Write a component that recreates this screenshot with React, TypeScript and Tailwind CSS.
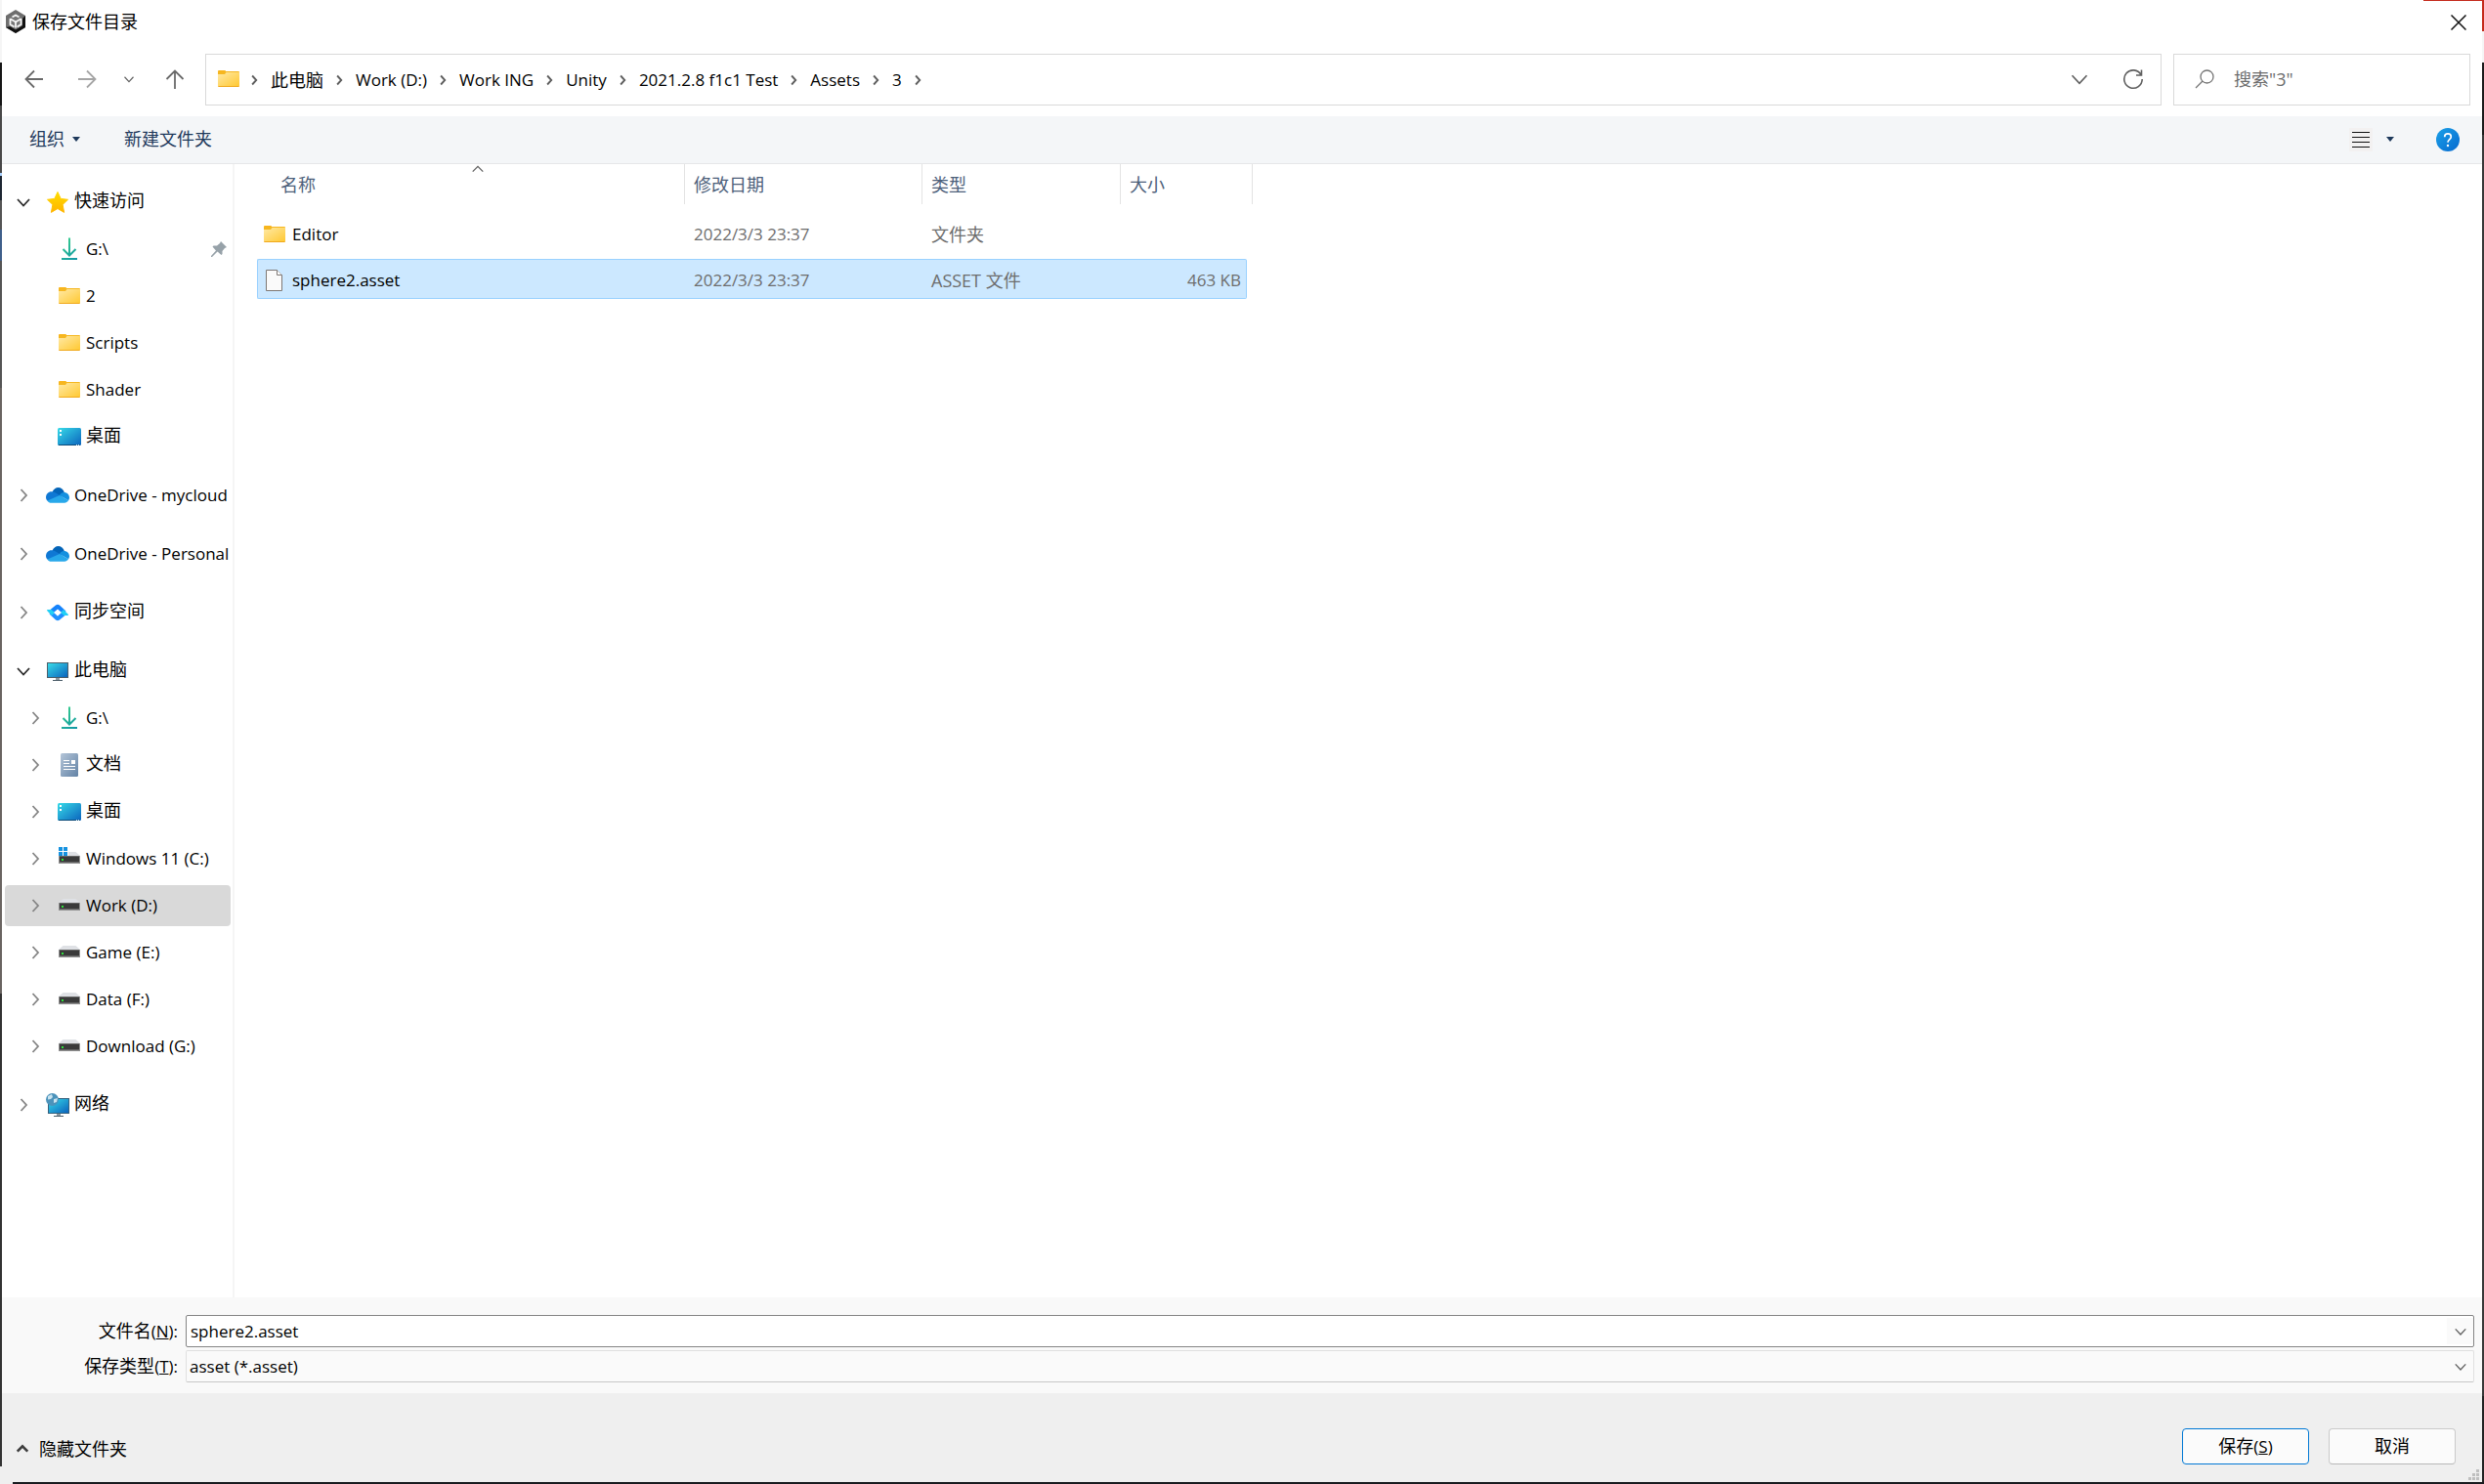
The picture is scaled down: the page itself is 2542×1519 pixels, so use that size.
import React from 'react';
import { clsx } from 'clsx';

type IconProps = { className?: string };

const Chevron: React.FC<{ d: string; size: number; color?: string; stroke?: number }> = ({ d, size, color = '#5f5f5f', stroke = 1.5 }) => (
  <svg width={size} height={size} viewBox="0 0 16 16" fill="none" stroke={color} strokeWidth={stroke} className="shrink-0">
    <path d={d} />
  </svg>
);

const RIGHT = 'M5.5 2l5.5 6-5.5 6';
const DOWN = 'M2 5l6 6.500 6-6.500';
const UP = 'M2 11l6-6 6 6';

const FolderIcon: React.FC<IconProps> = () => (
  <svg width="24" height="24" viewBox="0 0 24 24" className="shrink-0">
    <defs>
      <linearGradient id="folder" x1="0" y1="0" x2="1" y2="1">
        <stop offset="0" stopColor="#ffe9a6" />
        <stop offset="1" stopColor="#ffc933" />
      </linearGradient>
    </defs>
    <path d="M1 4q0-1 1-1h6q1 0 1 1v2H1z" fill="#f8b51c" />
    <path d="M1 5h7l1-1h13q1 0 1 1v14H1z" fill="#f5b721" />
    <path d="M1 7h7l1.500-2H23v14H1z" fill="url(#folder)" />
    <path d="M1 19h22q0 1-1 1H2q-1 0-1-1z" fill="#f0a91c" />
  </svg>
);

const FileIcon: React.FC<IconProps> = () => (
  <svg width="24" height="24" viewBox="0 0 24 24" className="shrink-0">
    <path d="M3.500 1.500h11l5 5v16h-16z" fill="#fafafa" stroke="#7d7774" />
    <path d="M14.500 1.500v5h5" fill="#fff" stroke="#7d7774" />
  </svg>
);

const StarIcon: React.FC<IconProps> = () => (
  <svg width="24" height="24" viewBox="0 0 24 24" className="shrink-0">
    <defs>
      <linearGradient id="star" x1="0" y1="0" x2="0" y2="1">
        <stop offset="0" stopColor="#ffdc00" />
        <stop offset="1" stopColor="#ffb400" />
      </linearGradient>
    </defs>
    <path d="M12 1.500l3.200 6.900 7.300.9-5.400 5.100 1.500 8-6.600-3.900-6.600 3.900 1.500-8L1.500 9.300l7.300-.9z" fill="url(#star)" stroke="url(#star)" strokeWidth="1" strokeLinejoin="round" />
  </svg>
);

const DownloadIcon: React.FC<IconProps> = () => (
  <svg width="24" height="24" viewBox="0 0 24 24" fill="none" className="shrink-0">
    <defs>
      <linearGradient id="dl" gradientUnits="userSpaceOnUse" x1="4" y1="0" x2="20" y2="24">
        <stop offset="0" stopColor="#3bd58a" />
        <stop offset="1" stopColor="#0f93a6" />
      </linearGradient>
    </defs>
    <path d="M12 .5v18M5.500 12l6.500 6.500 6.500-6.500M4 22h16" stroke="url(#dl)" strokeWidth="2" />
  </svg>
);

const DesktopIcon: React.FC<IconProps> = () => (
  <svg width="24" height="24" viewBox="0 0 24 24" className="shrink-0">
    <defs>
      <linearGradient id="desk" x1="0" y1="0" x2="1" y2="1">
        <stop offset="0" stopColor="#37dbe8" />
        <stop offset="1" stopColor="#0b63bd" />
      </linearGradient>
    </defs>
    <rect y="3" width="24" height="18" rx="1.500" fill="url(#desk)" />
    <path d="M1 20h22v1H1z" fill="#0c4a78" />
    <path d="M2 5h2v2H2zM2 9h2v2H2z" fill="#fff" />
    <path d="M19 20h1v1h-1zM21 20h1v1h-1z" fill="#d5eaf5" />
  </svg>
);

const CloudIcon: React.FC<IconProps> = () => (
  <svg width="24" height="24" viewBox="0 0 24 24" className="shrink-0">
    <path d="M6.500 8.500C8 5.500 10 4 12.500 4c3 0 5.500 2 6.300 5l-4.300 5z" fill="#0364b8" />
    <path d="M5.500 8.200c2 0 3 .4 4.500 1.300l8 5L3 18.600c-2-.8-3-2.400-3-4.600 0-3.200 2.500-5.800 5.500-5.800z" fill="#0f78d4" />
    <path d="M18.500 9c3 0 5.500 2.200 5.500 5.300 0 1-.3 2.200-1 3l-9-5.300c1-1.800 2.500-3 4.500-3z" fill="#1490df" />
    <path d="M14 12l9 5.300c-.9 1.600-2.400 2.500-4 2.500H5.500c-1.600 0-3.200-.9-4-2.300z" fill="#28a8ea" />
  </svg>
);

const SyncIcon: React.FC<IconProps> = () => (
  <svg width="24" height="24" viewBox="0 0 24 24" className="shrink-0">
    <path d="M4.500 9l5.500-4.500q2-1.500 4 0l6.500 6-4 3.500-4.500-5-5 5z" fill="#1683fb" />
    <path d="M19.500 15l-5.500 4.500q-2 1.500-4 0l-6.500-6 4-3.500 4.500 5.500 5-5.500z" fill="#1f8fff" />
    <path d="M1 9h4.500l3.500 3-3 3-4.500-4.500zM23 15h-4.500l-3.500-3 3-3 4.500 4.500z" fill="#22d0f5" />
    <path d="M12 8.500l4 3.500-4 3.500L8 12z" fill="#fff" />
  </svg>
);

const ComputerIcon: React.FC<IconProps> = () => (
  <svg width="24" height="24" viewBox="0 0 24 24" className="shrink-0">
    <path d="M1 3h22v16H1z" fill="#4b5d69" />
    <path d="M2 4h20v14H2z" fill="url(#desk)" />
    <path d="M10 19h4v2h-4z" fill="#8b979f" />
    <path d="M7 21h10v1H7z" fill="#4b5d69" />
  </svg>
);

const DocumentIcon: React.FC<IconProps> = () => (
  <svg width="24" height="24" viewBox="0 0 24 24" className="shrink-0">
    <defs>
      <linearGradient id="doc" x1="0" y1="0" x2="1" y2="1">
        <stop offset="0" stopColor="#b4c5d8" />
        <stop offset="1" stopColor="#6383a6" />
      </linearGradient>
    </defs>
    <rect x="3" width="18" height="24" rx="1.500" fill="url(#doc)" />
    <path d="M6 7h6v1H6zM6 10h6v1H6zM14 7h4v4h-4zM6 13h12v1H6zM6 16h12v1H6z" fill="#fff" />
  </svg>
);

const DriveIcon: React.FC<IconProps & { system?: boolean }> = ({ system }) => (
  <svg width="24" height="24" viewBox="0 0 24 24" className="shrink-0">
    <path d="M5.500 5h13L23 9H1z" fill="#dfe1e5" />
    <path d="M1 9h22v8H1z" fill="#8f8f8f" />
    <path d="M2 9.500h20v6H2z" fill="#3a3a3a" />
    <path d="M4 12h2v2H4z" fill="#2fe23c" />
    {system && (
      <>
        <path d="M0 0h11v9H0z" fill="#fff" />
        <path d="M1 0h4v4H1zM6 0h4v4H6zM1 5h4v4H1zM6 5h4v4H6z" fill="#1592e0" />
      </>
    )}
  </svg>
);

const NetworkIcon: React.FC<IconProps> = () => (
  <svg width="24" height="24" viewBox="0 0 24 24" className="shrink-0">
    <path d="M2 5h22v16H2z" fill="#35617d" />
    <path d="M3 6h20v14H3z" fill="url(#desk)" />
    <path d="M11 21h4v2h-4z" fill="#8b979f" />
    <path d="M8 23h10v1H8z" fill="#4b5d69" />
    <circle cx="6.500" cy="6.500" r="6.500" fill="#4c93bb" />
    <path d="M2 3l4-2 1 3-2 2-3 .5zM8 6l4-1-1 4-3 1z" fill="#c9e3ef" />
  </svg>
);

const PinIcon: React.FC<IconProps> = () => (
  <svg width="16" height="16" viewBox="0 0 16 16" className="shrink-0">
    <path d="M10 0l6 6-2 1-2.500 3v3l-1 1L6.500 10.500 1 16H0v-1l5-5.500-3.500-4 1-1h3.500l3-2.500z" fill="#97a2a9" />
  </svg>
);

const AppIcon: React.FC<IconProps> = () => (
  <svg width="24" height="24" viewBox="0 0 24 24" className="shrink-0">
    <path d="M12 0l10 6v12l-10 6-10-6V6z" fill="#6e6e6e" />
    <path d="M22 6v12l-10 6-10-6 10-2z" fill="#111" />
    <path d="M12 3.500l7 4.200v8.600l-7 4.200-7-4.200V7.700z" fill="#777" />
    <path d="M12 12.500v6M12 12.500L6.500 9.300M12 12.500l5.500-3.200M6.500 9v6l4 2.500M17.500 9v6l-4 2.500M8.500 7.500L12 5.500l3.500 2" fill="none" stroke="#f8f8f8" strokeWidth="1.800" />
  </svg>
);

interface TreeItem {
  label: string;
  icon: React.ReactNode;
  level?: number;
  state?: 'open' | 'closed';
  pinned?: boolean;
  selected?: boolean;
}

const sections: TreeItem[][] = [
  [
    { label: '快速访问', icon: <StarIcon />, state: 'open' },
    { label: 'G:\\', icon: <DownloadIcon />, level: 1, pinned: true },
    { label: '2', icon: <FolderIcon />, level: 1 },
    { label: 'Scripts', icon: <FolderIcon />, level: 1 },
    { label: 'Shader', icon: <FolderIcon />, level: 1 },
    { label: '桌面', icon: <DesktopIcon />, level: 1 },
  ],
  [{ label: 'OneDrive - mycloud', icon: <CloudIcon />, state: 'closed' }],
  [{ label: 'OneDrive - Personal', icon: <CloudIcon />, state: 'closed' }],
  [{ label: '同步空间', icon: <SyncIcon />, state: 'closed' }],
  [
    { label: '此电脑', icon: <ComputerIcon />, state: 'open' },
    { label: 'G:\\', icon: <DownloadIcon />, level: 1, state: 'closed' },
    { label: '文档', icon: <DocumentIcon />, level: 1, state: 'closed' },
    { label: '桌面', icon: <DesktopIcon />, level: 1, state: 'closed' },
    { label: 'Windows 11 (C:)', icon: <DriveIcon system />, level: 1, state: 'closed' },
    { label: 'Work (D:)', icon: <DriveIcon />, level: 1, state: 'closed', selected: true },
    { label: 'Game (E:)', icon: <DriveIcon />, level: 1, state: 'closed' },
    { label: 'Data (F:)', icon: <DriveIcon />, level: 1, state: 'closed' },
    { label: 'Download (G:)', icon: <DriveIcon />, level: 1, state: 'closed' },
  ],
  [{ label: '网络', icon: <NetworkIcon />, state: 'closed' }],
];

const crumbs = ['此电脑', 'Work (D:)', 'Work ING', 'Unity', '2021.2.8 f1c1 Test', 'Assets', '3'];

const files = [
  { name: 'Editor', date: '2022/3/3 23:37', type: '文件夹', size: '', icon: <FolderIcon />, selected: false },
  { name: 'sphere2.asset', date: '2022/3/3 23:37', type: 'ASSET 文件', size: '463 KB', icon: <FileIcon />, selected: true },
];

const isLatin = (text: string) => /^[\x20-\x7e]*$/.test(text);

const textSize = (text: string) => (isLatin(text) ? 'text-[17px]' : 'text-[18px]');

const TitleBar = () => (
  <header className="flex h-[44px] items-center justify-between pl-0.5">
    <div className="flex items-center gap-[5px]">
      <AppIcon />
      <h1 className="text-[18px]">保存文件目录</h1>
    </div>
    <button aria-label="关闭" className="flex h-full w-[60px] items-center justify-center border-t border-[#c42b1c] pl-3">
      <svg width="16" height="16" viewBox="0 0 16 16" stroke="#111" strokeWidth="1.500">
        <path d="M.5.5l15 15M15.500.5l-15 15" />
      </svg>
    </button>
  </header>
);

const AddressBar = () => (
  <div className="flex h-[75px] items-center pr-[12px] pb-px">
    <nav className="flex w-[208px] shrink-0 items-center pl-[21px]">
      <button aria-label="后退" className="w-[54px]">
        <svg width="24" height="24" viewBox="0 0 24 24" fill="none" stroke="#6a6a6a" strokeWidth="1.800">
          <path d="M3 12h18M12 3.500L3.500 12l8.500 8.500" />
        </svg>
      </button>
      <button aria-label="前进" className="w-[49px]">
        <svg width="24" height="24" viewBox="0 0 24 24" fill="none" stroke="#a5a5a5" strokeWidth="1.800">
          <path d="M3 12h18M12 3.500l8.500 8.500-8.500 8.500" />
        </svg>
      </button>
      <button aria-label="最近的位置" className="w-[41px]">
        <Chevron d={DOWN} size={12} />
      </button>
      <button aria-label="向上">
        <svg width="24" height="24" viewBox="0 0 24 24" fill="none" stroke="#6a6a6a" strokeWidth="1.800">
          <path d="M12 3v19M3.500 12L12 3.500l8.500 8.500" />
        </svg>
      </button>
    </nav>
    <div className="flex h-[53px] min-w-0 flex-1 items-center border border-[#d9d9d9] pl-[11px]">
      <FolderIcon />
      <div className="ml-2 flex flex-1 items-center pt-0.5">
        <Chevron d={RIGHT} size={12} stroke={2.500} />
        {crumbs.map((crumb) => (
          <React.Fragment key={crumb}>
            <button className={clsx('mr-[10px] ml-[11px] whitespace-nowrap', textSize(crumb))}>{crumb}</button>
            <Chevron d={RIGHT} size={12} stroke={2.500} />
          </React.Fragment>
        ))}
      </div>
      <button aria-label="以前的位置" className="flex w-[55px] justify-center">
        <Chevron d={DOWN} size={20} stroke={1.300} />
      </button>
      <button aria-label="刷新" className="flex w-[56px] justify-center">
        <svg width="22" height="22" viewBox="0 0 22 22" fill="none" stroke="#5f5f5f" strokeWidth="1.600">
          <path d="M19 6.500A9.200 9.200 0 1 0 20.200 11M19.500 1.500v5.500H14" />
        </svg>
      </button>
    </div>
    <label className="ml-3 flex h-[53px] w-[304px] items-center border border-[#d9d9d9] pl-[21px]">
      <svg width="20" height="20" viewBox="0 0 20 20" fill="none" stroke="#757575" strokeWidth="1.300" className="shrink-0">
        <circle cx="12.500" cy="7.500" r="6.500" />
        <path d="M8 12l-7 7" />
      </svg>
      <input aria-label="搜索" placeholder={'搜索"3"'} className="ml-5 w-full min-w-0 bg-transparent text-[18px] outline-none placeholder:text-[#6d6d6d]" />
    </label>
  </div>
);

const Caret = () => (
  <svg width="8" height="5" viewBox="0 0 8 5">
    <path d="M0 0h8L4 5z" fill="#1e395b" />
  </svg>
);

const Toolbar = () => (
  <div className="flex h-[49px] items-center justify-between border-b border-[#e6e7e9] bg-[#f4f6f8] pr-[23px] pb-px pl-[28px] text-[18px] text-[#1e395b]">
    <div className="flex items-center">
      <button className="flex items-center gap-2">
        组织
        <Caret />
      </button>
      <button className="ml-[45px]">新建文件夹</button>
    </div>
    <div className="flex items-center">
      <button aria-label="更改视图" className="flex items-center gap-3.5">
        <svg width="24" height="24" viewBox="0 0 24 24">
          <path d="M0 0h24v24H0z" fill="#f3f1f1" />
          <path d="M3 4.500h18M3 9.500h18M3 14.500h18M3 19.500h18" stroke="#111" />
        </svg>
        <Caret />
      </button>
      <button aria-label="帮助" className="ml-[43px]">
        <svg width="24" height="24" viewBox="0 0 24 24" fill="none">
          <defs>
            <linearGradient id="help" x1="0" y1="0" x2="1" y2="1">
              <stop offset="0" stopColor="#1ba1e8" />
              <stop offset="1" stopColor="#0669cf" />
            </linearGradient>
          </defs>
          <circle cx="12" cy="12" r="12" fill="url(#help)" />
          <path d="M8.700 9.200c0-2 1.400-3.300 3.300-3.300s3.300 1.200 3.300 3c0 2.600-3.300 2.900-3.300 5.900" stroke="#fff" strokeWidth="1.700" />
          <circle cx="12" cy="18" r="1.200" fill="#fff" />
        </svg>
      </button>
    </div>
  </div>
);

const TreeRow: React.FC<{ item: TreeItem }> = ({ item }) => (
  <button
    className={clsx(
      'my-[3px] mr-[2px] ml-[3px] flex h-[42px] items-center rounded-sm',
      item.level ? 'pl-[19px]' : 'pl-[7px]',
      item.selected && 'bg-[#d9d9d9]',
    )}
  >
    <span className="flex w-6 shrink-0 justify-center">
      {item.state === 'open' && <Chevron d={DOWN} size={16} color="#2b2b2b" stroke={1.800} />}
      {item.state === 'closed' && <Chevron d={RIGHT} size={16} color="#858585" stroke={1.800} />}
    </span>
    <span className="ml-[11px] w-6 shrink-0">{item.icon}</span>
    <span className={clsx('ml-[5px] whitespace-nowrap', isLatin(item.label) ? 'text-[17px]' : 'pb-[3px] text-[18px]')}>{item.label}</span>
    {item.pinned && (
      <span className="mr-1 ml-auto">
        <PinIcon />
      </span>
    )}
  </button>
);

const Sidebar = () => (
  <aside className="flex w-[238px] shrink-0 flex-col gap-3 overflow-hidden border-r-2 border-[#f5f5f5] pt-[15px]">
    {sections.map((items, index) => (
      <div key={index} className="flex flex-col">
        {items.map((item) => (
          <TreeRow key={item.label} item={item} />
        ))}
      </div>
    ))}
  </aside>
);

const HeaderCell: React.FC<{ label: string; sorted?: boolean }> = ({ label, sorted }) => (
  <th className="p-0 text-left align-top font-normal">
    <div className={clsx('relative flex h-[41px] items-center border-r border-[#e3e3e3] pt-px', sorted ? 'pl-6' : 'pl-[9px]')}>
      {label}
      {sorted && (
        <span className="absolute -top-0.5 left-1/2">
          <Chevron d={UP} size={14} />
        </span>
      )}
    </div>
  </th>
);

const FileList = () => (
  <main className="min-w-0 flex-1 overflow-hidden pl-[23px]">
    <table className="-mt-[6px] w-[1019px] table-fixed border-separate border-spacing-x-0 border-spacing-y-[6px]">
      <colgroup>
        <col className="w-[438px]" />
        <col className="w-[243px]" />
        <col className="w-[203px]" />
        <col className="w-[129px]" />
        <col className="w-[6px]" />
      </colgroup>
      <thead>
        <tr className="h-[44px] text-[18px] text-[#4c607a]">
          <HeaderCell label="名称" sorted />
          <HeaderCell label="修改日期" />
          <HeaderCell label="类型" />
          <th className="p-0 text-left align-top font-normal">
            <div className="flex h-[41px] items-center pt-px pl-[9px]">大小</div>
          </th>
          <td className="p-0 align-top">
            <div className="h-[41px] border-r border-[#e3e3e3]" />
          </td>
        </tr>
      </thead>
      <tbody>
        {files.map((file) => {
          const cell = clsx('border-y pt-[3px] pb-0', file.selected ? 'border-[#99d1ff] bg-[#cce8ff]' : 'border-transparent');
          return (
            <tr key={file.name} className="h-[41px] text-[17px] text-[#6d6d6d]">
              <td className={clsx(cell, 'rounded-l-[2px] border-l pr-0 pl-[5px]')}>
                <div className="flex items-center gap-[6px] text-black">
                  {file.icon}
                  {file.name}
                </div>
              </td>
              <td className={clsx(cell, 'pr-0 pl-[9px]')}>{file.date}</td>
              <td className={clsx(cell, 'pr-0 pl-[9px]', textSize(file.type))}>{file.type}</td>
              <td className={clsx(cell, 'rounded-r-[2px] border-r pr-[5px] pl-0 text-right')}>{file.size}</td>
            </tr>
          );
        })}
      </tbody>
    </table>
  </main>
);

const SaveFields = () => (
  <div className="grid grid-cols-[180px_1fr] items-center gap-x-2 gap-y-[3px] bg-[#f9f9f9] pt-[18px] pr-2 pb-[11px]">
    <label htmlFor="file-name" className="text-right text-[18px]">
      文件名<span className="text-[17px]">(<u>N</u>):</span>
    </label>
    <div className="relative">
      <input id="file-name" defaultValue="sphere2.asset" className="h-[33px] w-full rounded-[2px] border border-[#858585] bg-white pl-1 text-[17px] outline-none" />
      <span className="absolute inset-y-[3px] right-px flex w-[27px] items-center justify-center bg-[#fafafa]">
        <Chevron d={DOWN} size={14} />
      </span>
    </div>
    <label htmlFor="file-type" className="text-right text-[18px]">
      保存类型<span className="text-[17px]">(<u>T</u>):</span>
    </label>
    <div className="relative">
      <select id="file-type" className="h-[33px] w-full appearance-none rounded-[2px] border border-[#e0e0e0] border-b-[#c8c8c8] bg-[#fafafa] pl-[3px] text-[17px] outline-none">
        <option>asset (*.asset)</option>
      </select>
      <span className="pointer-events-none absolute inset-y-[3px] right-px flex w-[27px] items-center justify-center">
        <Chevron d={DOWN} size={14} />
      </span>
    </div>
  </div>
);

const Footer = () => (
  <footer className="relative flex h-[91px] items-end justify-between bg-[#efefef] pr-[27px] pb-[18px] pl-[14px]">
    <button className="flex h-[32px] items-center gap-[10px] text-[18px]">
      <Chevron d={UP} size={14} color="#3c3c3c" stroke={3} />
      隐藏文件夹
    </button>
    <div className="flex gap-5">
      <button className="h-[37px] w-[130px] rounded-[4px] border border-[#0078d4] bg-[#fbfbfb] pb-px text-[18px]">
        保存<span className="text-[17px]">(<u>S</u>)</span>
      </button>
      <button className="h-[37px] w-[130px] rounded-[4px] border border-[#cacaca] border-b-[#b8b8b8] bg-[#fbfbfb] pb-px text-[18px]">取消</button>
    </div>
    <svg width="11" height="11" viewBox="0 0 11 11" className="absolute right-[3px] bottom-[2px]">
      <path d="M8 0h3v3H8zM4 4h3v3H4zM8 4h3v3H8zM0 8h3v3H0zM4 8h3v3H4zM8 8h3v3H8z" fill="#bfbfbf" />
    </svg>
  </footer>
);

// Slivers of the window behind the dialog show along its edges
const LeftEdge = () => (
  <div className="flex w-[2px] shrink-0 flex-col">
    <div className="h-[64px] bg-[#f5f5f5]" />
    <div className="h-[44px] bg-[#161616]" />
    <div className="h-[69px] bg-[#484848]" />
    <div className="h-[3px] bg-[#a9d1ff]" />
    <div className="h-[25px] bg-[#1d2633]" />
    <div className="h-[30px] bg-[#555]" />
    <div className="h-[32px] bg-[#3f5f8a]" />
    <div className="h-[130px] bg-[#555]" />
    <div className="h-[620px] bg-[#6a6461]" />
    <div className="flex-1 bg-[#333]" />
    <div className="h-[16px] bg-[#efefef]" />
  </div>
);

const RightEdge = () => (
  <div className="flex w-[2px] shrink-0 flex-col">
    <div className="h-[32px] bg-[#c42b1c]" />
    <div className="h-[32px] bg-[#f5f5f5]" />
    <div className="h-[74px] bg-[#1b1b1b]" />
    <div className="flex-1 bg-[#383838]" />
    <div className="h-[88px] bg-[#222]" />
  </div>
);

const App: React.FC = () => (
  <div className="flex min-h-screen flex-col bg-[#191b1f] font-['Open_Sans','Noto_Sans_CJK_SC',sans-serif] text-black">
    <div className="flex flex-1">
      <LeftEdge />
      <div className="flex min-w-0 flex-1 flex-col bg-white">
        <TitleBar />
        <AddressBar />
        <Toolbar />
        <div className="flex flex-1">
          <Sidebar />
          <FileList />
        </div>
        <SaveFields />
        <Footer />
      </div>
      <RightEdge />
    </div>
    <div className="h-[2px] border-l-[13px] border-[#efefef] bg-[#191b1f]" />
  </div>
);

export default App;
